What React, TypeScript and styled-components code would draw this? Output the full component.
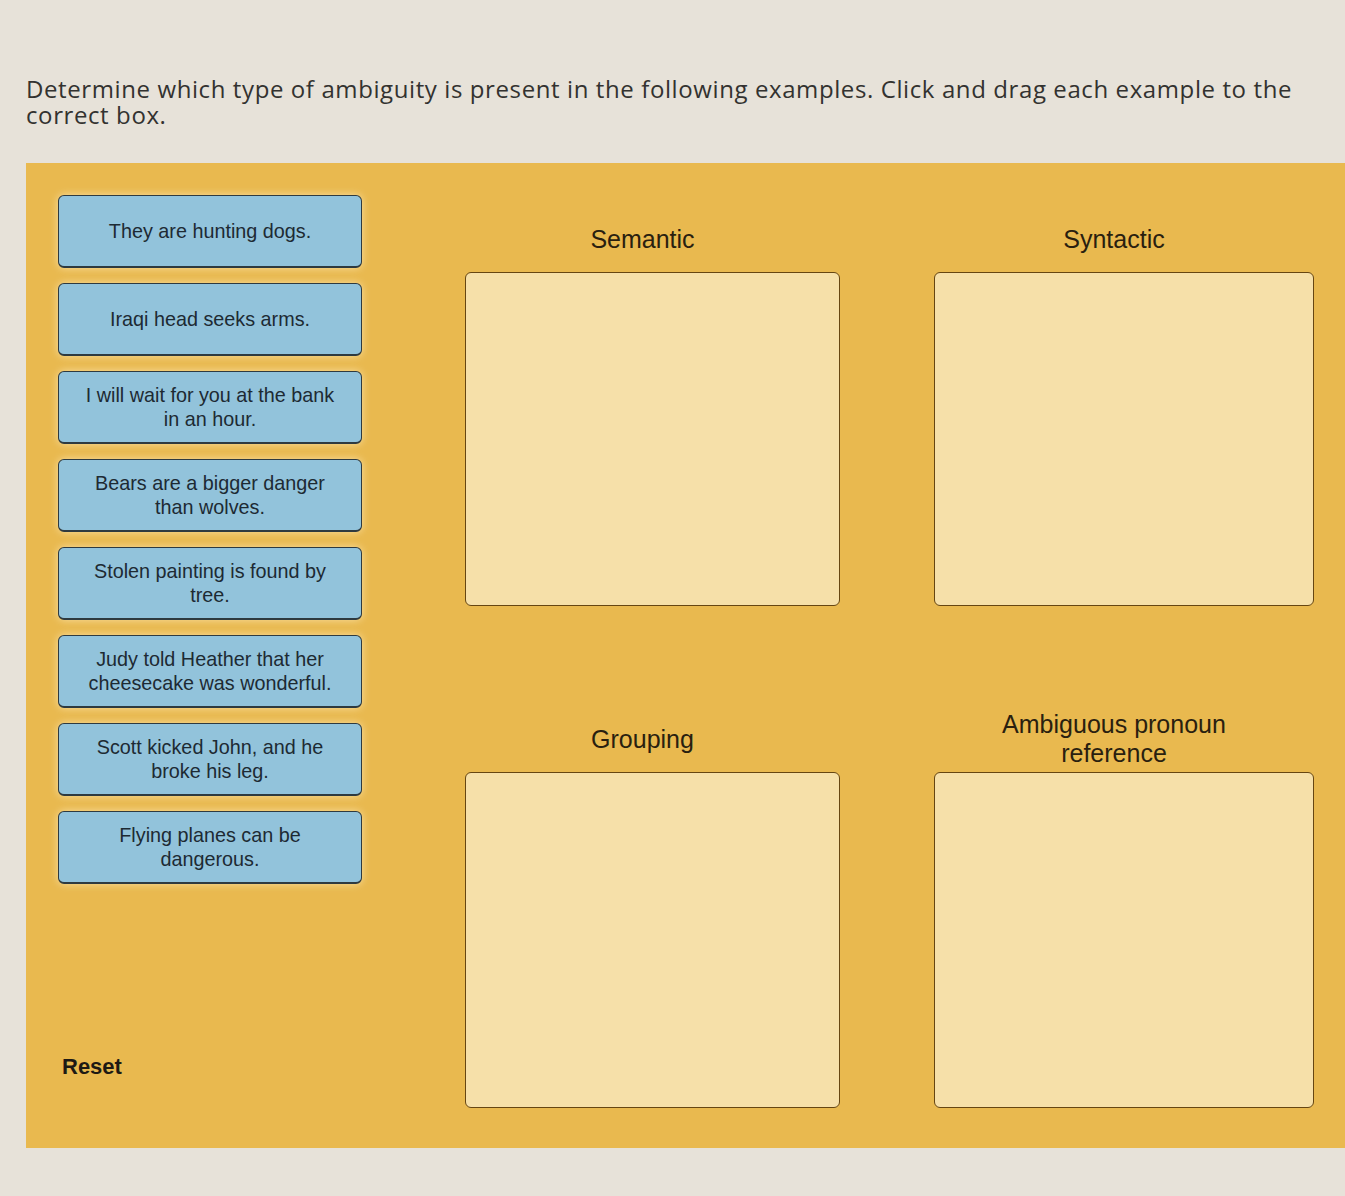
import React from 'react'
import styled, { createGlobalStyle } from 'styled-components'

const examples = [
  'They are hunting dogs.',
  'Iraqi head seeks arms.',
  'I will wait for you at the bank in an hour.',
  'Bears are a bigger danger than wolves.',
  'Stolen painting is found by tree.',
  'Judy told Heather that her cheesecake was wonderful.',
  'Scott kicked John, and he broke his leg.',
  'Flying planes can be dangerous.',
]

const categories = ['Semantic', 'Syntactic', 'Grouping', 'Ambiguous pronoun reference']

const GlobalStyle = createGlobalStyle`
  html, body {
    margin: 0;
    padding: 0;
    background: #e7e2d9;
  }
  body {
    overflow-x: hidden;
  }
`

const Page = styled.div`
  width: 1345px;
  padding-top: 76px;
  padding-bottom: 48px;
`

const Prompt = styled.p`
  margin: 0 0 35px 26px;
  width: 1280px;
  font-family: 'Open Sans', Lato, sans-serif;
  font-size: 24px;
  letter-spacing: 0.6px;
  line-height: 26px;
  color: #333230;
`

const Panel = styled.div`
  margin-left: 26px;
  width: 1319px;
  box-sizing: border-box;
  padding: 32px 29px 40px 32px;
  background: #e9b94f;
  display: grid;
  grid-template-columns: 304px 1fr;
  column-gap: 103px;
`

const Bank = styled.div`
  display: flex;
  flex-direction: column;
  gap: 15px;
  padding-bottom: 28px;
`

const Card = styled.div`
  height: 73px;
  box-sizing: border-box;
  display: flex;
  align-items: center;
  justify-content: center;
  padding: 0 19px;
  text-align: center;
  background: #92c3db;
  border: 1.5px solid #2e3a40;
  border-bottom-width: 2px;
  border-radius: 6px;
  box-shadow: 0 0 8px rgba(255, 236, 190, 0.75);
  font-family: 'Liberation Sans', Arial, sans-serif;
  font-size: 19.8px;
  line-height: 24px;
  color: #1d2a33;
`

const Reset = styled.button`
  margin-top: auto;
  align-self: flex-start;
  padding: 0 0 0 4px;
  border: none;
  background: none;
  font-family: 'Liberation Sans', Arial, sans-serif;
  font-weight: bold;
  font-size: 22px;
  line-height: 26px;
  color: #1e1a14;
  cursor: pointer;
`

const Zones = styled.div`
  margin-top: 11px;
  display: grid;
  grid-template-columns: 375px 380px;
  column-gap: 94px;
  row-gap: 100px;
`

const Zone = styled.div`
  display: flex;
  flex-direction: column;
`

const ZoneLabel = styled.div`
  height: 66px;
  display: flex;
  align-items: center;
  justify-content: center;
  text-align: center;
  padding: 0 50px 0 30px;
  font-family: 'Liberation Sans', Arial, sans-serif;
  font-size: 25px;
  line-height: 29px;
  color: #2a1f0f;
`

const DropBox = styled.div<{ $tall?: boolean }>`
  height: ${(p) => (p.$tall ? 336 : 334)}px;
  box-sizing: border-box;
  background: #f6e0a9;
  border: 1.5px solid #664612;
  border-radius: 6px;
`

export default function App() {
  return (
    <>
      <GlobalStyle />
      <Page>
        <Prompt>
          Determine which type of ambiguity is present in the following examples. Click and drag each example to the
          correct box.
        </Prompt>

        <Panel>
          <Bank>
            {examples.map((text) => (
              <Card key={text}>{text}</Card>
            ))}
            <Reset>Reset</Reset>
          </Bank>

          <Zones>
            {categories.map((name, i) => (
              <Zone key={name}>
                <ZoneLabel>{name}</ZoneLabel>
                <DropBox $tall={i > 1} />
              </Zone>
            ))}
          </Zones>
        </Panel>
      </Page>
    </>
  )
}
